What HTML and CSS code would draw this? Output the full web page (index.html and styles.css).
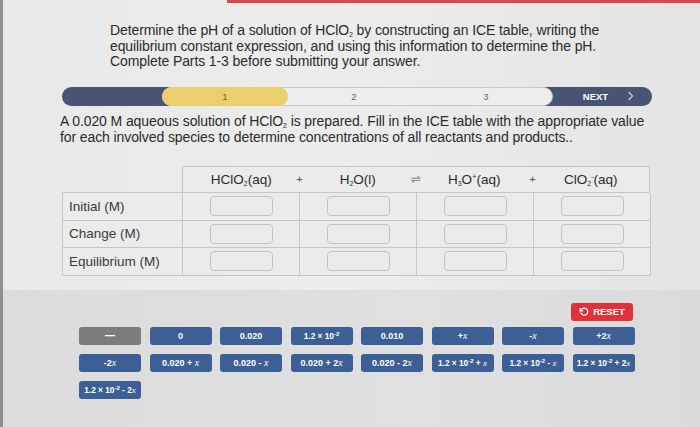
FILE: index.html
```html
<!DOCTYPE html>
<html>
<head>
<meta charset="utf-8">
<link rel="stylesheet" href="styles.css">
</head>
<body>
<div class="page">
  <div class="topline"></div>
  <p class="question">Determine the pH of a solution of HClO<sub>2</sub> by constructing an ICE table, writing the<br>equilibrium constant expression, and using this information to determine the pH.<br>Complete Parts 1-3 before submitting your answer.</p>

  <div class="steps">
    <div class="steps-track">
      <div class="step step-active">1</div>
      <div class="step">2</div>
      <div class="step">3</div>
    </div>
    <div class="steps-next">
      <span>NEXT</span>
      <svg class="chev" width="7" height="10" viewBox="0 0 7 10"><polyline points="1.5,1 5.5,5 1.5,9" fill="none" stroke="#b9c6e6" stroke-width="1.3"/></svg>
    </div>
  </div>

  <p class="prompt">A 0.020 M aqueous solution of HClO<sub>2</sub> is prepared. Fill in the ICE table with the appropriate value<br>for each involved species to determine concentrations of all reactants and products..</p>

  <div class="ice">
    <div class="ice-head">
      <span class="sp sp1">HClO<sub>2</sub>(aq)</span>
      <span class="op op1">+</span>
      <span class="sp sp2">H<sub>2</sub>O(l)</span>
      <span class="op op2 eq">⇌</span>
      <span class="sp sp3">H<sub>3</sub>O<sup>+</sup>(aq)</span>
      <span class="op op3">+</span>
      <span class="sp sp4">ClO<sub>2</sub><sup>-</sup>(aq)</span>
    </div>
    <div class="ice-body">
      <div class="lbl r1">Initial (M)</div>
      <div class="cell r1"><span class="box"></span></div>
      <div class="cell r1"><span class="box"></span></div>
      <div class="cell r1"><span class="box"></span></div>
      <div class="cell r1 last"><span class="box"></span></div>
      <div class="lbl r2">Change (M)</div>
      <div class="cell r2"><span class="box"></span></div>
      <div class="cell r2"><span class="box"></span></div>
      <div class="cell r2"><span class="box"></span></div>
      <div class="cell r2 last"><span class="box"></span></div>
      <div class="lbl r3">Equilibrium (M)</div>
      <div class="cell r3"><span class="box"></span></div>
      <div class="cell r3"><span class="box"></span></div>
      <div class="cell r3"><span class="box"></span></div>
      <div class="cell r3 last"><span class="box"></span></div>
    </div>
  </div>

  <div class="tray">
    <div class="tray-top">
      <button class="reset">
        <svg width="10" height="10" viewBox="0 0 24 24"><path d="M3 3v6h6" fill="none" stroke="#fff" stroke-width="3" stroke-linecap="round" stroke-linejoin="round"/><path d="M4.5 14a8.5 8.5 0 1 0 1.6-8.4L3 9" fill="none" stroke="#fff" stroke-width="3" stroke-linecap="round"/></svg>
        RESET
      </button>
    </div>
    <div class="chips">
      <span class="chip chip-grey"><span>—</span></span>
      <span class="chip"><span>0</span></span>
      <span class="chip"><span>0.020</span></span>
      <span class="chip small"><span>1.2 × 10<sup>-2</sup></span></span>
      <span class="chip"><span>0.010</span></span>
      <span class="chip"><span>+<i>x</i></span></span>
      <span class="chip"><span>-<i>x</i></span></span>
      <span class="chip"><span>+2<i>x</i></span></span>
      <span class="chip"><span>-2<i>x</i></span></span>
      <span class="chip"><span>0.020 + <i>x</i></span></span>
      <span class="chip"><span>0.020 - <i>x</i></span></span>
      <span class="chip"><span>0.020 + 2<i>x</i></span></span>
      <span class="chip"><span>0.020 - 2<i>x</i></span></span>
      <span class="chip small"><span>1.2 × 10<sup>-2</sup> + <i>x</i></span></span>
      <span class="chip small"><span>1.2 × 10<sup>-2</sup> - <i>x</i></span></span>
      <span class="chip small"><span>1.2 × 10<sup>-2</sup> + 2<i>x</i></span></span>
      <span class="chip small"><span>1.2 × 10<sup>-2</sup> - 2<i>x</i></span></span>
    </div>
  </div>
</div>
</body>
</html>
```

FILE: styles.css
```css
* { box-sizing: border-box; }
html, body { margin: 0; padding: 0; }
body {
  width: 700px;
  height: 427px;
  overflow: hidden;
  font-family: "Liberation Sans", Arial, sans-serif;
  color: #2b2b2b;
  background: #e8e8e8;
}
.page {
  height: 427px;
  border-left: 3px solid #8f8f8f;
  background: linear-gradient(90deg, #e9e9e9 0%, #ececec 50%, #e4e4e4 100%);
  display: flex;
  flex-direction: column;
}
.topline {
  height: 3px;
  margin-left: 224px;
  background: #d9474d;
  flex: none;
}
sub {
  font-size: 7px;
  line-height: 0;
  vertical-align: -2px;
}
sup {
  font-size: 7.5px;
  line-height: 0;
  vertical-align: 5px;
}
.question {
  margin: 20px 0 0 107px;
  font-size: 14px;
  line-height: 15.5px;
  letter-spacing: -0.1px;
}
.steps {
  margin: 17px 0 0 59px;
  width: 590px;
  height: 19px;
  background: #485473;
  border-radius: 10px;
  display: flex;
  justify-content: flex-end;
  flex: none;
}
.steps-track {
  width: 391px;
  height: 19px;
  background: #ededed;
  border: 1px solid #c9c9c9;
  border-radius: 10px;
  display: flex;
  position: relative;
  z-index: 1;
}
.step {
  flex: 1;
  display: flex;
  align-items: center;
  justify-content: center;
  font-size: 9.5px;
  color: #666;
}
.step-active {
  flex: none;
  width: 126px;
  margin: -1px 0 -1px -1px;
  background: #ebcf6c;
  border-radius: 10px;
  color: #6b6040;
}
.steps-next {
  width: 109px;
  margin-left: -10px;
  padding-left: 10px;
  display: flex;
  align-items: center;
  justify-content: center;
  gap: 19px;
  color: #fff;
  font-size: 9.5px;
  font-weight: bold;
}
.steps-next span { margin-left: 12px; }
.prompt {
  margin: 7px 0 0 57px;
  font-size: 14px;
  line-height: 16px;
  letter-spacing: -0.1px;
}
.ice {
  margin: 21px 0 0 59px;
  width: 588px;
  font-size: 13.5px;
  flex: none;
}
.ice-head {
  margin-left: 120px;
  width: 468px;
  height: 26px;
  border: 1px solid #c6c6c6;
  border-bottom: none;
  background: #ebebeb;
  display: grid;
  grid-template-columns: repeat(8, 1fr);
  align-items: center;
}
.sp, .op { grid-row: 1; text-align: center; }
.sp1 { grid-column: 1 / 3; }
.sp2 { grid-column: 3 / 5; }
.sp3 { grid-column: 5 / 7; }
.sp4 { grid-column: 7 / 9; }
.op1 { grid-column: 2 / 4; }
.op2 { grid-column: 4 / 6; }
.op3 { grid-column: 6 / 8; }
.op { color: #555; font-size: 11px; }
.eq { font-family: "DejaVu Sans", sans-serif; color: #888; font-size: 12px; }
.ice-body {
  display: grid;
  grid-template-columns: 120px repeat(4, 117px);
  grid-template-rows: 28px 27px 28px;
  border: 1px solid #c6c6c6;
  border-right: none;
  border-bottom: none;
  background: #ebebeb;
}
.lbl, .cell {
  border-right: 1px solid #c6c6c6;
  border-bottom: 1px solid #c6c6c6;
  display: flex;
  align-items: center;
}
.lbl {
  padding-left: 6px;
  color: #3a3a3a;
}
.cell { justify-content: center; }
.box {
  width: 63px;
  height: 20px;
  border: 1px solid #c3c3c3;
  border-radius: 4px;
  background: #ebebeb;
}
.tray {
  margin-top: 14px;
  flex: 1;
  background: linear-gradient(90deg, #dcdcdc 0%, #e0e0e0 60%, #dadada 100%);
  padding: 13px 0 0 76px;
}
.tray-top {
  display: flex;
  justify-content: flex-end;
  width: 554px;
}
.reset {
  width: 62px;
  height: 18px;
  border: none;
  border-radius: 3px;
  background: #e1323a;
  color: #fff;
  font-family: "Liberation Sans", Arial, sans-serif;
  font-weight: bold;
  font-size: 9.5px;
  display: flex;
  align-items: center;
  justify-content: center;
  gap: 4px;
  padding: 0;
}
.chips {
  margin-top: 6px;
  display: grid;
  grid-template-columns: repeat(8, 62px);
  grid-auto-rows: 18px;
  column-gap: 8.5px;
  row-gap: 9px;
}
.chip {
  background: #3c5f95;
  border-radius: 3px;
  color: #fff;
  font-size: 9px;
  font-weight: bold;
  display: flex;
  align-items: center;
  justify-content: center;
  white-space: nowrap;
}
.chip i { font-family: "Liberation Serif", serif; font-weight: normal; font-size: 10px; }
.chip.small { font-size: 8.3px; }
.chip.small i { font-size: 9px; }
.chip sup { font-size: 6px; vertical-align: 3px; }
.chip-grey { background: #7c7c7c; font-size: 10px; }
```
